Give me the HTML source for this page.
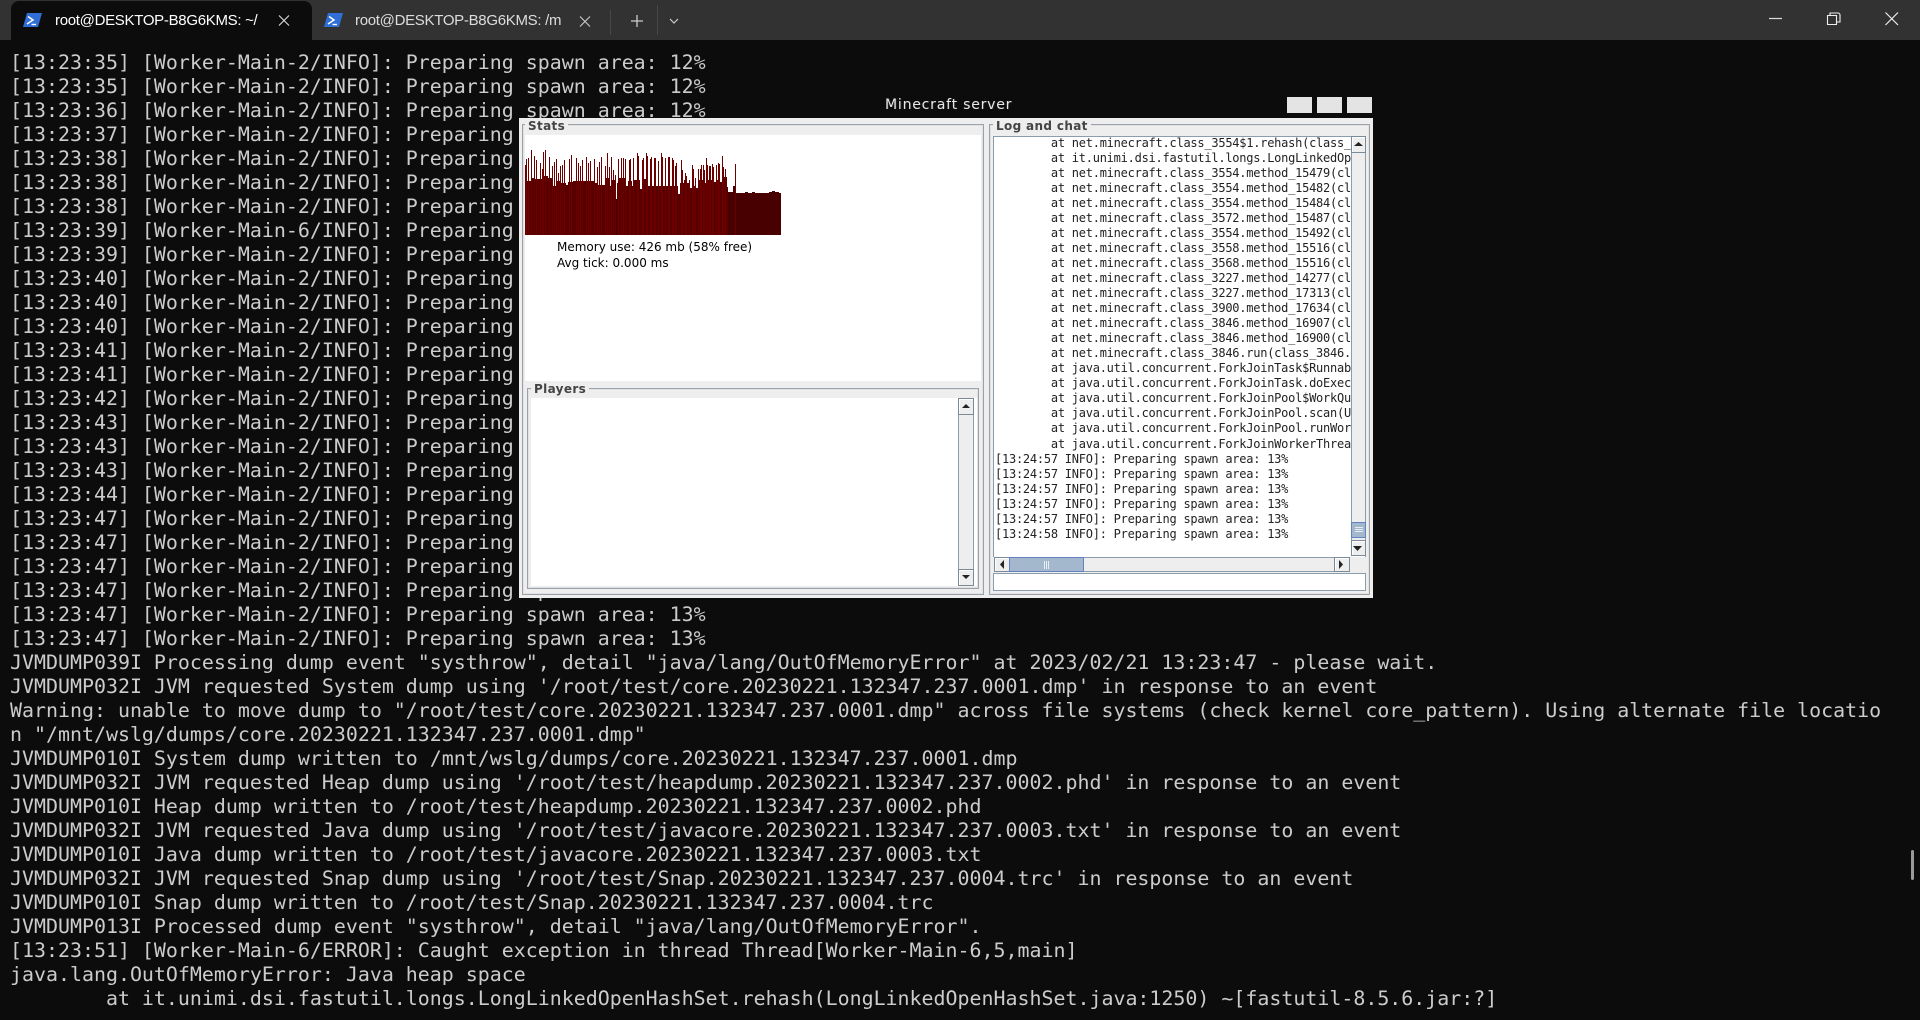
<!DOCTYPE html>
<html><head><meta charset="utf-8"><style>
*{box-sizing:border-box}
html,body{margin:0;padding:0;width:1920px;height:1020px;overflow:hidden;background:#0c0c0c}
.a{position:absolute}
#term{left:10px;top:51px;font:19.93px/24px "DejaVu Sans Mono","Liberation Mono",monospace;color:#ccc;white-space:pre;letter-spacing:0}
#bar{left:0;top:0;width:1920px;height:40px;background:#323232}
.tt{font:15px/20px "Liberation Sans",sans-serif;white-space:nowrap;overflow:hidden;top:11px;letter-spacing:-.3px}
.pane{border:1px solid #9aa1a8;box-shadow:inset 0 0 0 1px #e2e2e2}
.lg{background:#eee;font:bold 12px/14px "DejaVu Sans",sans-serif;color:#444;padding:0 3px;white-space:nowrap;letter-spacing:.35px}
.btn{background:#eee;border:1px solid #7a8a99;box-shadow:inset 1px 1px 0 #fff}
#log{left:994px;top:136.2px;width:357px;height:420px;overflow:hidden;font:12px/15.02px "DejaVu Sans Mono",monospace;color:#222;white-space:pre;letter-spacing:-.245px;padding-left:1px}
</style></head><body>
<div id="term" class="a">[13:23:35] [Worker-Main-2/INFO]: Preparing spawn area: 12%
[13:23:35] [Worker-Main-2/INFO]: Preparing spawn area: 12%
[13:23:36] [Worker-Main-2/INFO]: Preparing spawn area: 12%
[13:23:37] [Worker-Main-2/INFO]: Preparing spawn area: 12%
[13:23:38] [Worker-Main-2/INFO]: Preparing spawn area: 12%
[13:23:38] [Worker-Main-2/INFO]: Preparing spawn area: 12%
[13:23:38] [Worker-Main-2/INFO]: Preparing spawn area: 12%
[13:23:39] [Worker-Main-6/INFO]: Preparing spawn area: 12%
[13:23:39] [Worker-Main-2/INFO]: Preparing spawn area: 12%
[13:23:40] [Worker-Main-2/INFO]: Preparing spawn area: 12%
[13:23:40] [Worker-Main-2/INFO]: Preparing spawn area: 12%
[13:23:40] [Worker-Main-2/INFO]: Preparing spawn area: 12%
[13:23:41] [Worker-Main-2/INFO]: Preparing spawn area: 12%
[13:23:41] [Worker-Main-2/INFO]: Preparing spawn area: 12%
[13:23:42] [Worker-Main-2/INFO]: Preparing spawn area: 12%
[13:23:43] [Worker-Main-2/INFO]: Preparing spawn area: 12%
[13:23:43] [Worker-Main-2/INFO]: Preparing spawn area: 12%
[13:23:43] [Worker-Main-2/INFO]: Preparing spawn area: 12%
[13:23:44] [Worker-Main-2/INFO]: Preparing spawn area: 12%
[13:23:47] [Worker-Main-2/INFO]: Preparing spawn area: 13%
[13:23:47] [Worker-Main-2/INFO]: Preparing spawn area: 13%
[13:23:47] [Worker-Main-2/INFO]: Preparing spawn area: 13%
[13:23:47] [Worker-Main-2/INFO]: Preparing spawn area: 13%
[13:23:47] [Worker-Main-2/INFO]: Preparing spawn area: 13%
[13:23:47] [Worker-Main-2/INFO]: Preparing spawn area: 13%
JVMDUMP039I Processing dump event "systhrow", detail "java/lang/OutOfMemoryError" at 2023/02/21 13:23:47 - please wait.
JVMDUMP032I JVM requested System dump using '/root/test/core.20230221.132347.237.0001.dmp' in response to an event
Warning: unable to move dump to "/root/test/core.20230221.132347.237.0001.dmp" across file systems (check kernel core_pattern). Using alternate file locatio
n "/mnt/wslg/dumps/core.20230221.132347.237.0001.dmp"
JVMDUMP010I System dump written to /mnt/wslg/dumps/core.20230221.132347.237.0001.dmp
JVMDUMP032I JVM requested Heap dump using '/root/test/heapdump.20230221.132347.237.0002.phd' in response to an event
JVMDUMP010I Heap dump written to /root/test/heapdump.20230221.132347.237.0002.phd
JVMDUMP032I JVM requested Java dump using '/root/test/javacore.20230221.132347.237.0003.txt' in response to an event
JVMDUMP010I Java dump written to /root/test/javacore.20230221.132347.237.0003.txt
JVMDUMP032I JVM requested Snap dump using '/root/test/Snap.20230221.132347.237.0004.trc' in response to an event
JVMDUMP010I Snap dump written to /root/test/Snap.20230221.132347.237.0004.trc
JVMDUMP013I Processed dump event "systhrow", detail "java/lang/OutOfMemoryError".
[13:23:51] [Worker-Main-6/ERROR]: Caught exception in thread Thread[Worker-Main-6,5,main]
java.lang.OutOfMemoryError: Java heap space
        at it.unimi.dsi.fastutil.longs.LongLinkedOpenHashSet.rehash(LongLinkedOpenHashSet.java:1250) ~[fastutil-8.5.6.jar:?]</div>

<div class="a" style="left:1911px;top:850px;width:3px;height:30px;background:#9a9a9a;border-radius:2px"></div>

<div id="bar" class="a"></div>
<div class="a" style="left:11px;top:1px;width:301px;height:39px;background:#0c0c0c;border-radius:8px 8px 0 0"></div>
<svg class="a" style="left:0;top:0" width="700" height="40">
 <g id="i"><path d="M27 13H42L38 27H23Z" fill="#2e6ed6"/><path d="M28 16.5L33 20L27 24" fill="none" stroke="#fff" stroke-width="1.5"/><path d="M31.5 24.5H36" stroke="#fff" stroke-width="1.4"/></g>
 <g transform="translate(301 0)"><path d="M27 13H42L38 27H23Z" fill="#2e6ed6"/><path d="M28 16.5L33 20L27 24" fill="none" stroke="#fff" stroke-width="1.5"/><path d="M31.5 24.5H36" stroke="#fff" stroke-width="1.4"/></g>
 <path d="M279 15.5L289 25.5M289 15.5L279 25.5" stroke="#ddd" stroke-width="1.1" fill="none"/>
 <path d="M580 16.5L590 26.5M590 16.5L580 26.5" stroke="#ccc" stroke-width="1.1" fill="none"/>
 <path d="M610.5 10V35M657.5 5V35" stroke="#484848"/>
 <path d="M631 21H643M637 15V27" stroke="#ccc" stroke-width="1.3"/>
 <path d="M670 19L674 23L678 19" stroke="#ccc" stroke-width="1.2" fill="none"/>
</svg>
<div class="a tt" style="left:55px;width:205px;color:#fff">root@DESKTOP-B8G6KMS: ~/</div>
<div class="a tt" style="left:355px;width:206px;color:#ddd">root@DESKTOP-B8G6KMS: /m</div>
<svg class="a" style="left:1760px;top:0" width="160" height="40">
 <path d="M9 18.500H22" stroke="#ddd" stroke-width="1.2"/>
 <path d="M67.500 15.500h9v9h-9zM70 15V13h8a2 2 0 0 1 2 2v7h-3" fill="none" stroke="#eee" stroke-width="1.1"/>
 <path d="M125.500 12.500L138 25M138 12.500L125.500 25" stroke="#eee" stroke-width="1.2" fill="none"/>
</svg>

<!-- Title strip -->
<div class="a" style="left:885px;top:97px;font:14px/16px 'DejaVu Sans',sans-serif;color:#e8e8e8;letter-spacing:.8px;text-shadow:1px 0 0 #222;white-space:nowrap">Minecraft server</div>
<div class="a" style="left:1287px;top:97px;width:25px;height:16px;background:#e4e4e4"></div>
<div class="a" style="left:1317px;top:97px;width:25px;height:16px;background:#e4e4e4"></div>
<div class="a" style="left:1347px;top:97px;width:25px;height:16px;background:#e4e4e4"></div>

<!-- Window -->
<div class="a" style="left:519px;top:118px;width:854px;height:480px;background:#eee"></div>

<!-- Stats -->
<div class="a pane" style="left:522px;top:124px;width:462px;height:471px"></div>
<div class="a lg" style="left:525px;top:119px">Stats</div>
<div class="a" style="left:525px;top:135px;width:456px;height:246px;background:#fff"></div>
<svg class="a" style="left:0;top:0" width="800" height="240" shape-rendering="crispEdges">
 <path fill="#580000" d="M525 235V181H531V178H535V179H542V176H548V178H553V186H557V181H561V183H566V185H568V182H573V181H595V183H598V185H603V185H606V178H609V186H612V180H615V181H616V199H617V183H618V178H626V186H628V181H632V186H634V180H640V189H642V179H646V186H678V194H680V183H684V180H686V183H690V188H692V186H696V188H698V180H703V183H707V180H712V182H716V180H720V182H722V176H724V177H727V187H728V235Z"/>
 <path fill="#480000" d="M728 235V192H733V186H735V193H745V192H748V193H752V192H755V193H769V192H772V191H775V192H779V193H781V235Z"/>
 <path stroke="#6c0000" stroke-width="1" fill="none" d="M525.500 165V235M526.500 159V235M528.500 158V235M531.500 150V235M534.500 156V235M536.500 160V235M540.500 163V235M542.500 169V235M543.500 152V235M545.500 150V235M549.500 157V235M552.500 166V235M554.500 162V235M556.500 159V235M558.500 173V235M560.500 166V235M562.500 165V235M564.500 160V235M569.500 159V235M571.500 155V235M576.500 158V235M578.500 163V235M580.500 166V235M582.500 160V235M586.500 157V235M588.500 163V235M590.500 161V235M594.500 159V235M597.500 167V235M599.500 162V235M601.500 157V235M605.500 166V235M607.500 153V235M609.500 167V235M611.500 157V235M613.500 170V235M615.500 175V235M618.500 159V235M621.500 158V235M623.500 158V235M625.500 159V235M629.500 160V235M630.500 159V235M633.500 158V235M637.500 153V235M638.500 156V235M642.500 160V235M643.500 158V235M646.500 153V235M647.500 156V235M650.500 159V235M651.500 157V235M654.500 158V235M655.500 158V235M658.500 161V235M661.500 153V235M662.500 157V235M665.500 158V235M668.500 157V235M669.500 157V235M672.500 158V235M673.500 160V235M675.500 166V235M676.500 163V235M681.500 160V235M682.500 170V235M685.500 173V235M686.500 176V235M689.500 180V235M692.500 165V235M693.500 169V235M695.500 178V235M698.500 169V235M700.500 169V235M701.500 165V235M703.500 165V235M704.500 170V235M706.500 158V235M707.500 165V235M709.500 166V235M710.500 166V235M712.500 164V235M713.500 167V235M716.500 165V235M718.500 163V235M719.500 164V235M722.500 156V235M723.500 167V235M725.500 169V235M735.500 164V235"/>
 <path stroke="#400000" d="M616.500 199V235"/>
</svg>
<div class="a" style="left:557px;top:239px;font:12px/16px 'DejaVu Sans',sans-serif;color:#000;white-space:pre">Memory use: 426 mb (58% free)
Avg tick: 0.000 ms</div>

<!-- Players -->
<div class="a pane" style="left:527px;top:388px;width:452px;height:201px"></div>
<div class="a lg" style="left:531px;top:382px">Players</div>
<div class="a" style="left:531px;top:398px;width:446px;height:188px;background:#fff"></div>
<div class="a" style="left:958px;top:398px;width:16px;height:188px;background:#eee;border:1px solid #8b9cad"></div>
<div class="a btn" style="left:958px;top:398px;width:16px;height:17px"></div>
<div class="a btn" style="left:958px;top:569px;width:16px;height:17px"></div>
<svg class="a" style="left:0;top:0" width="1400" height="600">
 <path d="M962 408H970L966 404Z" fill="#222"/>
 <path d="M962 575H970L966 579Z" fill="#222"/>
</svg>

<!-- Log -->
<div class="a pane" style="left:989px;top:124px;width:381px;height:471px"></div>
<div class="a lg" style="left:993px;top:119px">Log and chat</div>
<div class="a" style="left:993px;top:136px;width:373px;height:421px;background:#fff;border:1px solid #8b9cad;border-bottom:0"></div>
<div id="log" class="a">        at net.minecraft.class_3554$1.rehash(class_3554.java:1)
        at it.unimi.dsi.fastutil.longs.LongLinkedOpenHashSet
        at net.minecraft.class_3554.method_15479(class_3554
        at net.minecraft.class_3554.method_15482(class_3554
        at net.minecraft.class_3554.method_15484(class_3554
        at net.minecraft.class_3572.method_15487(class_3572
        at net.minecraft.class_3554.method_15492(class_3554
        at net.minecraft.class_3558.method_15516(class_3558
        at net.minecraft.class_3568.method_15516(class_3568
        at net.minecraft.class_3227.method_14277(class_3227
        at net.minecraft.class_3227.method_17313(class_3227
        at net.minecraft.class_3900.method_17634(class_3900
        at net.minecraft.class_3846.method_16907(class_3846
        at net.minecraft.class_3846.method_16900(class_3846
        at net.minecraft.class_3846.run(class_3846.java:1)
        at java.util.concurrent.ForkJoinTask$RunnableExecute
        at java.util.concurrent.ForkJoinTask.doExec(ForkJoin
        at java.util.concurrent.ForkJoinPool$WorkQueue.topLe
        at java.util.concurrent.ForkJoinPool.scan(Unknown So
        at java.util.concurrent.ForkJoinPool.runWorker(Unkno
        at java.util.concurrent.ForkJoinWorkerThread.run(Unk
[13:24:57 INFO]: Preparing spawn area: 13%
[13:24:57 INFO]: Preparing spawn area: 13%
[13:24:57 INFO]: Preparing spawn area: 13%
[13:24:57 INFO]: Preparing spawn area: 13%
[13:24:57 INFO]: Preparing spawn area: 13%
[13:24:58 INFO]: Preparing spawn area: 13%</div>
<!-- v scrollbar -->
<div class="a" style="left:1351px;top:136px;width:15px;height:420px;background:#eee;border:1px solid #8b9cad"></div>
<div class="a btn" style="left:1351px;top:136px;width:15px;height:17px"></div>
<div class="a" style="left:1351px;top:522px;width:15px;height:16px;background:#a3b8cc;border:1px solid #6382bf"></div>
<div class="a btn" style="left:1351px;top:540px;width:15px;height:16px"></div>
<!-- h scrollbar -->
<div class="a" style="left:994px;top:557px;width:356px;height:15px;background:#eee;border:1px solid #8b9cad"></div>
<div class="a btn" style="left:994px;top:557px;width:16px;height:15px"></div>
<div class="a" style="left:1009px;top:557px;width:75px;height:15px;background:#a3b8cc;border:1px solid #6382bf"></div>
<div class="a btn" style="left:1334px;top:557px;width:16px;height:15px"></div>
<div class="a" style="left:993px;top:573px;width:373px;height:18px;background:#fff;border:1px solid #8b9cad"></div>
<svg class="a" style="left:0;top:0" width="1400" height="600">
 <path d="M1354 146H1363L1358.500 142Z" fill="#222"/>
 <path d="M1353 546H1362L1357.500 551Z" fill="#222"/>
 <path d="M1004 560V569L1000 564.500Z" fill="#222"/>
 <path d="M1339 560V569L1343 564.500Z" fill="#222"/>
 <path d="M1355 527.500H1363M1355 529.500H1363M1355 531.500H1363" stroke="#e8eef4"/>
 <path d="M1044.500 561V569M1046.500 561V569M1048.500 561V569" stroke="#e8eef4"/>
</svg>
</body></html>
